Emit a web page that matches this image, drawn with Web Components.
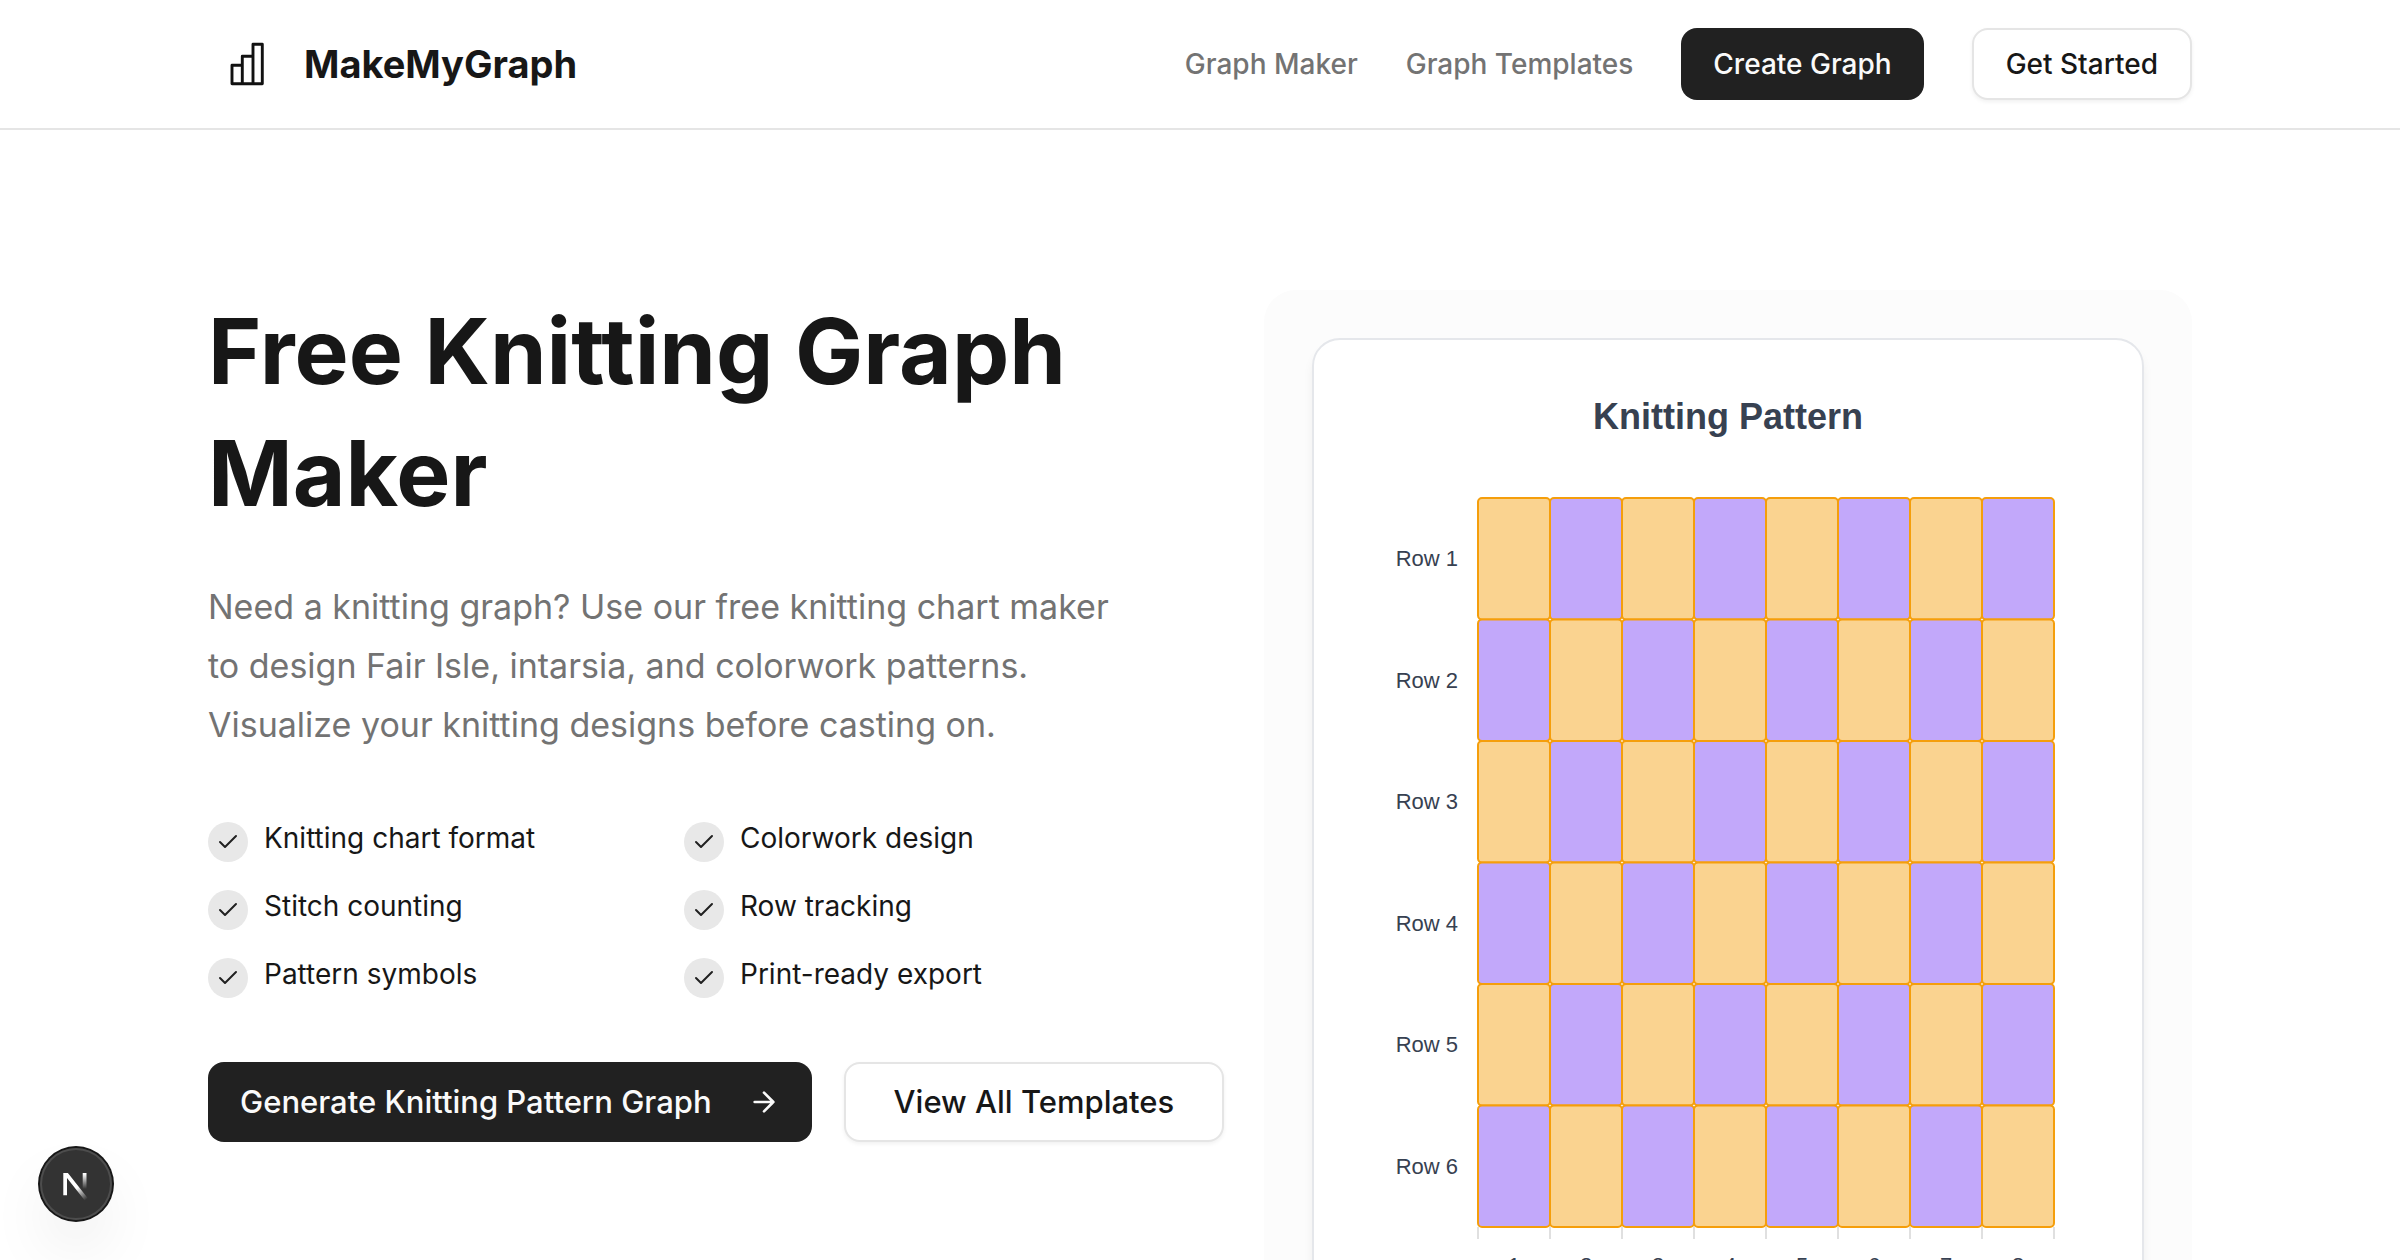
<!DOCTYPE html>
<html lang="en">
<head>
<meta charset="utf-8">
<title>Free Knitting Graph Maker - MakeMyGraph</title>
<style>
  body {
    margin: 0;
    height: 100vh;
    overflow: hidden;
    background: #fff;
    color: #171717;
    font-family: Inter, "Liberation Sans", sans-serif;
    font-size: 28px;
    line-height: 40px;
  }
</style>
</head>
<body>
<site-header>
  <nav-link href="#maker">Graph Maker</nav-link>
  <nav-link href="#templates">Graph Templates</nav-link>
  <mg-button variant="dark">Create Graph</mg-button>
  <mg-button>Get Started</mg-button>
</site-header>

<hero-section>
  <span slot="title">Free Knitting Graph Maker</span>
  <span slot="text">Need a knitting graph? Use our free knitting chart maker to design Fair Isle, intarsia, and colorwork patterns. Visualize your knitting designs before casting on.</span>
  <feature-item slot="features">Knitting chart format</feature-item>
  <feature-item slot="features">Colorwork design</feature-item>
  <feature-item slot="features">Stitch counting</feature-item>
  <feature-item slot="features">Row tracking</feature-item>
  <feature-item slot="features">Pattern symbols</feature-item>
  <feature-item slot="features">Print-ready export</feature-item>
  <mg-button slot="actions" variant="dark" size="large" arrow>Generate Knitting Pattern Graph</mg-button>
  <mg-button slot="actions" size="large">View All Templates</mg-button>
  <knitting-chart slot="preview" heading="Knitting Pattern" rows="6" cols="8"></knitting-chart>
</hero-section>

<dev-badge></dev-badge>

<script>
class SiteHeader extends HTMLElement {
  constructor() {
    super();
    this.attachShadow({ mode: "open" });
    this.shadowRoot.innerHTML = `
    <style>
      :host {
        display: block;
        border-bottom: 2px solid #e5e5e5;
      }

      header {
        display: flex;
        align-items: center;
        justify-content: space-between;
        max-width: 1984px;
        height: 128px;
        margin: 0 auto;
      }

      .logo {
        display: flex;
        align-items: center;
        gap: 16px;
        color: #171717;
        font-size: 38px;
        font-weight: 700;
        text-decoration: none;
      }

      svg {
        display: block;
        width: 80px;
        height: 80px;
      }

      nav {
        display: flex;
        align-items: center;
        gap: 48px;
      }
    </style>
    <header>
      <a class="logo" href="#">
        <svg viewBox="0 0 80 80" fill="none" stroke="#111" stroke-width="2.9" stroke-linejoin="round" aria-hidden="true">
          <path d="M24 41.3h10.3v18.4H24zM34.3 32.3H45v27.4H34.3zM45 20.3h9.3v39.4H45z"/>
        </svg>
        <span>MakeMyGraph</span>
      </a>
      <nav><slot></slot></nav>
    </header>`;
  }
}

class NavLink extends HTMLElement {
  constructor() {
    super();
    this.attachShadow({ mode: "open" });
    this.shadowRoot.innerHTML = `
    <style>
      :host {
        display: block;
      }

      a {
        color: #737373;
        font-weight: 450;
        text-decoration: none;
        white-space: nowrap;
      }
    </style>
    <a><slot></slot></a>`;
  }

  connectedCallback() {
    this.shadowRoot.querySelector("a").href = this.getAttribute("href");
  }
}

class MgButton extends HTMLElement {
  constructor() {
    super();
    this.attachShadow({ mode: "open" });
    this.shadowRoot.innerHTML = `
    <style>
      :host {
        display: block;
      }

      button {
        display: flex;
        align-items: center;
        justify-content: center;
        gap: 36px;
        box-sizing: border-box;
        height: 72px;
        padding: 0 32px;
        border: 2px solid #e5e5e5;
        border-radius: 16px;
        background: #fff;
        color: #171717;
        box-shadow: 0 2px 4px rgba(0, 0, 0, 0.06);
        font: inherit;
        font-weight: 500;
        white-space: nowrap;
        cursor: pointer;
      }

      :host([variant="dark"]) button {
        border: 0;
        background: #212121;
        color: #fafafa;
        box-shadow: none;
      }

      :host([size="large"]) button {
        height: 80px;
        padding: 0 48px;
        font-size: 31px;
      }

      :host([arrow]) button {
        padding: 0 32px;
      }

      svg {
        display: none;
        width: 32px;
        height: 32px;
      }

      :host([arrow]) svg {
        display: block;
      }
    </style>
    <button type="button">
      <slot></slot>
      <svg viewBox="0 0 24 24" fill="none" stroke="currentColor" stroke-width="2" stroke-linecap="round" stroke-linejoin="round" aria-hidden="true">
        <path d="M5 12h14M12 5l7 7-7 7"/>
      </svg>
    </button>`;
  }
}

class FeatureItem extends HTMLElement {
  constructor() {
    super();
    this.attachShadow({ mode: "open" });
    this.shadowRoot.innerHTML = `
    <style>
      :host {
        display: flex;
        align-items: flex-start;
        gap: 16px;
      }

      .tick {
        display: grid;
        place-items: center;
        flex: none;
        width: 40px;
        height: 40px;
        margin-top: 4px;
        border-radius: 50%;
        background: #e8e8e8;
      }

      svg {
        width: 24px;
        height: 24px;
      }
    </style>
    <span class="tick">
      <svg viewBox="0 0 24 24" fill="none" stroke="#212121" stroke-width="2" stroke-linecap="round" stroke-linejoin="round" aria-hidden="true">
        <path d="M20 6 9 17l-5-5"/>
      </svg>
    </span>
    <span><slot></slot></span>`;
  }
}

class HeroSection extends HTMLElement {
  constructor() {
    super();
    this.attachShadow({ mode: "open" });
    this.shadowRoot.innerHTML = `
    <style>
      :host {
        display: block;
        padding: 160px 0;
      }

      .columns {
        display: grid;
        grid-template-columns: minmax(0, 1fr) minmax(0, 1fr);
        gap: 128px;
        align-items: start;
        max-width: 1984px;
        margin: 0 auto;
      }

      .copy {
        display: grid;
        grid-template-columns: minmax(0, 1fr);
        gap: 64px;
      }

      h1 {
        margin: 0 0 43px;
        font-size: 91px;
        font-weight: 700;
        line-height: 122px;
      }

      p {
        margin: 0;
        color: #737373;
        font-size: 34px;
        line-height: 59px;
      }

      .features {
        display: grid;
        grid-template-columns: 1fr 1fr;
        gap: 24px;
      }

      .actions {
        display: flex;
        gap: 32px;
      }

      .preview {
        padding: 48px;
        border-radius: 32px;
        background: #fcfcfc;
      }
    </style>
    <div class="columns">
      <div class="copy">
        <div>
          <h1><slot name="title"></slot></h1>
          <p><slot name="text"></slot></p>
        </div>
        <div class="features"><slot name="features"></slot></div>
        <div class="actions"><slot name="actions"></slot></div>
      </div>
      <div class="preview"><slot name="preview"></slot></div>
    </div>`;
  }
}

class KnittingChart extends HTMLElement {
  constructor() {
    super();
    this.attachShadow({ mode: "open" });
    this.shadowRoot.innerHTML = `
    <style>
      :host {
        display: block;
        border: 2px solid #e5e7eb;
        border-radius: 28px;
        background: #fff;
        box-shadow: 0 8px 12px -2px rgba(0, 0, 0, 0.08);
      }

      svg {
        display: block;
        width: 100%;
        font-family: "Liberation Sans", Arial, sans-serif;
        font-size: 22px;
      }

      text {
        fill: #374151;
      }

      .heading {
        font-size: 36px;
        font-weight: 700;
      }

      rect {
        stroke: #f59e0b;
        stroke-width: 2;
      }

      .tick {
        stroke: #e0e0e0;
        stroke-width: 2;
      }
    </style>
    <svg viewBox="0 0 828 1000" role="img"></svg>`;
  }

  connectedCallback() {
    const rows = Number(this.getAttribute("rows"));
    const cols = Number(this.getAttribute("cols"));
    const heading = this.getAttribute("heading");
    const left = 164;
    const top = 158;
    const cellWidth = 576 / cols;
    const cellHeight = 729 / rows;
    const bottom = top + 729;
    let out = `<text class="heading" x="414" y="89" text-anchor="middle">${heading}</text>`;

    // axis ticks go first so the cells paint over them
    for (let c = 0; c <= cols; c++) {
      const x = left + c * cellWidth;
      out += `<line class="tick" x1="${x}" y1="${bottom}" x2="${x}" y2="${bottom + 12}"/>`;
    }

    for (let r = 0; r < rows; r++) {
      const y = top + r * cellHeight;
      out += `<text x="144" y="${y + 68}" text-anchor="end">Row ${r + 1}</text>`;
      for (let c = 0; c < cols; c++) {
        const fill = (r + c) % 2 ? "#c2a8fa" : "#fad390";
        out += `<rect x="${left + c * cellWidth}" y="${y}" width="${cellWidth}" height="${cellHeight}" rx="4" fill="${fill}"/>`;
      }
    }

    for (let c = 0; c < cols; c++) {
      const x = left + (c + 0.5) * cellWidth;
      out += `<text x="${x}" y="${bottom + 46}" text-anchor="middle">${c + 1}</text>`;
    }

    const svg = this.shadowRoot.querySelector("svg");
    svg.setAttribute("aria-label", heading);
    svg.innerHTML = out;
  }
}

class DevBadge extends HTMLElement {
  constructor() {
    super();
    this.attachShadow({ mode: "open" });
    this.shadowRoot.innerHTML = `
    <style>
      :host {
        position: fixed;
        left: 40px;
        bottom: 40px;
      }

      button {
        display: block;
        width: 72px;
        height: 72px;
        padding: 0;
        border: 0;
        border-radius: 50%;
        background: #333;
        box-shadow: 0 0 0 2px #171717, inset 0 0 0 2px #4d4d4d, 0 32px 64px -8px rgba(0, 0, 0, 0.1);
        cursor: pointer;
      }

      svg {
        display: block;
      }
    </style>
    <button type="button" aria-label="Open dev tools">
      <svg viewBox="0 0 72 72" width="72" height="72" aria-hidden="true">
        <defs>
          <linearGradient id="diagonal" x1="38" y1="39" x2="47" y2="51" gradientUnits="userSpaceOnUse">
            <stop stop-color="#fff"/>
            <stop offset="1" stop-color="#fff" stop-opacity="0"/>
          </linearGradient>
          <linearGradient id="stem" x1="0" y1="26" x2="0" y2="41" gradientUnits="userSpaceOnUse">
            <stop stop-color="#fff"/>
            <stop offset="1" stop-color="#fff" stop-opacity="0"/>
          </linearGradient>
        </defs>
        <path d="M23.3 25h4.6L48 50.6l-3.2 1.9L27 30v17.3h-3.7z" fill="url(#diagonal)"/>
        <path d="M42.7 25h3.8v18h-3.8z" fill="url(#stem)"/>
      </svg>
    </button>`;
  }
}

customElements.define("site-header", SiteHeader);
customElements.define("nav-link", NavLink);
customElements.define("mg-button", MgButton);
customElements.define("feature-item", FeatureItem);
customElements.define("hero-section", HeroSection);
customElements.define("knitting-chart", KnittingChart);
customElements.define("dev-badge", DevBadge);
</script>
</body>
</html>
